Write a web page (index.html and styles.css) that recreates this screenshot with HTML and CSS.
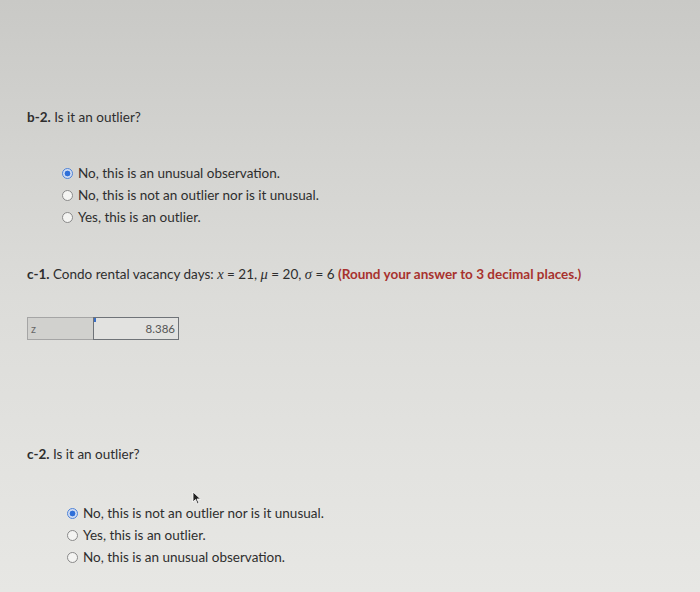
FILE: index.html
```html
<!DOCTYPE html>
<html>
<head>
<meta charset="utf-8">
<link rel="stylesheet" href="styles.css">
</head>
<body>
<div class="page">
  <section class="q q-b2">
    <p class="title"><b>b-2.</b> Is it an outlier?</p>
    <ul class="opts">
      <li><span class="radio on"></span>No, this is an unusual observation.</li>
      <li><span class="radio"></span>No, this is not an outlier nor is it unusual.</li>
      <li><span class="radio"></span>Yes, this is an outlier.</li>
    </ul>
  </section>
  <section class="q q-c1">
    <p class="title"><b>c-1.</b> Condo rental vacancy days: <i class="m">x</i> = 21, <i class="m">μ</i> = 20, <i class="m">σ</i> = 6 <span class="red">(Round your answer to 3 decimal places.)</span></p>
    <div class="table">
      <div class="cell label">z</div>
      <div class="cell value"><span class="caret"></span>8.386</div>
    </div>
  </section>
  <section class="q q-c2">
    <p class="title"><b>c-2.</b> Is it an outlier?</p>
    <ul class="opts">
      <li><span class="radio on"></span>No, this is not an outlier nor is it unusual.</li>
      <li><span class="radio"></span>Yes, this is an outlier.</li>
      <li><span class="radio"></span>No, this is an unusual observation.</li>
    </ul>
  </section>
  <svg class="cursor" width="10" height="14" viewBox="0 0 10 14"><path d="M1 1 L1 11 L3.5 8.5 L5.5 13 L7 12.3 L5 8 L8.5 8 Z" fill="#222" stroke="#fff" stroke-width="0.8"/></svg>
</div>
</body>
</html>
```
FILE: styles.css
```css
html, body {
  margin: 0;
  padding: 0;
}
body {
  width: 700px;
  height: 592px;
  overflow: hidden;
  background: linear-gradient(180deg, #c9c9c6 0%, #d3d3d0 25%, #dcdcd9 50%, #e2e2df 75%, #e7e7e4 100%);
  font-family: Lato, "Liberation Sans", sans-serif;
  color: #2e2e2e;
  font-size: 13.5px;
}
.page {
  position: relative;
  padding: 109px 0 0 27px;
  height: 592px;
  box-sizing: border-box;
}
p { margin: 0; }
.title {
  line-height: 16px;
}
.title b { font-weight: 700; }
.m { font-family: "Liberation Serif", serif; font-style: italic; font-size: 14.5px; }
.red { color: #a8322e; font-weight: 700; }
.opts {
  list-style: none;
  margin: 0;
  padding: 0;
}
.opts li {
  display: flex;
  align-items: center;
  height: 22px;
}
.radio {
  width: 9px;
  height: 9px;
  border: 1px solid #8a8a8a;
  border-radius: 50%;
  background: #f4f4f2;
  margin-right: 5px;
  box-sizing: content-box;
  position: relative;
}
.radio.on {
  border-color: #4f83d8;
  background: radial-gradient(circle, #2f6fd8 0 2.6px, #cfdcf3 3.2px);
}
.q-b2 .opts {
  margin: 37px 0 0 35px;
}
.q-c1 { margin-top: 38px; }
.table {
  display: flex;
  margin-top: 35px;
  height: 23px;
}
.cell {
  box-sizing: border-box;
  height: 23px;
  display: flex;
  align-items: center;
  font-size: 11px;
}
.label {
  width: 66px;
  border: 1px solid #a5a5a5;
  border-right: none;
  background: #d1d1ce;
  padding-left: 3px;
  color: #666;
}
.value {
  position: relative;
  width: 86px;
  border: 1.5px solid #6f7378;
  background: #e2e2e0;
  justify-content: flex-end;
  padding-right: 3px;
  color: #555;
  font-size: 11.5px;
}
.caret {
  position: absolute;
  left: 0;
  top: 0;
  width: 2px;
  height: 4px;
  background: #3a6fc8;
}
.q-c2 { margin-top: 106px; }
.q-c2 .opts {
  margin: 40px 0 0 40px;
}
.cursor {
  position: absolute;
  left: 192px;
  top: 491px;
}
```
